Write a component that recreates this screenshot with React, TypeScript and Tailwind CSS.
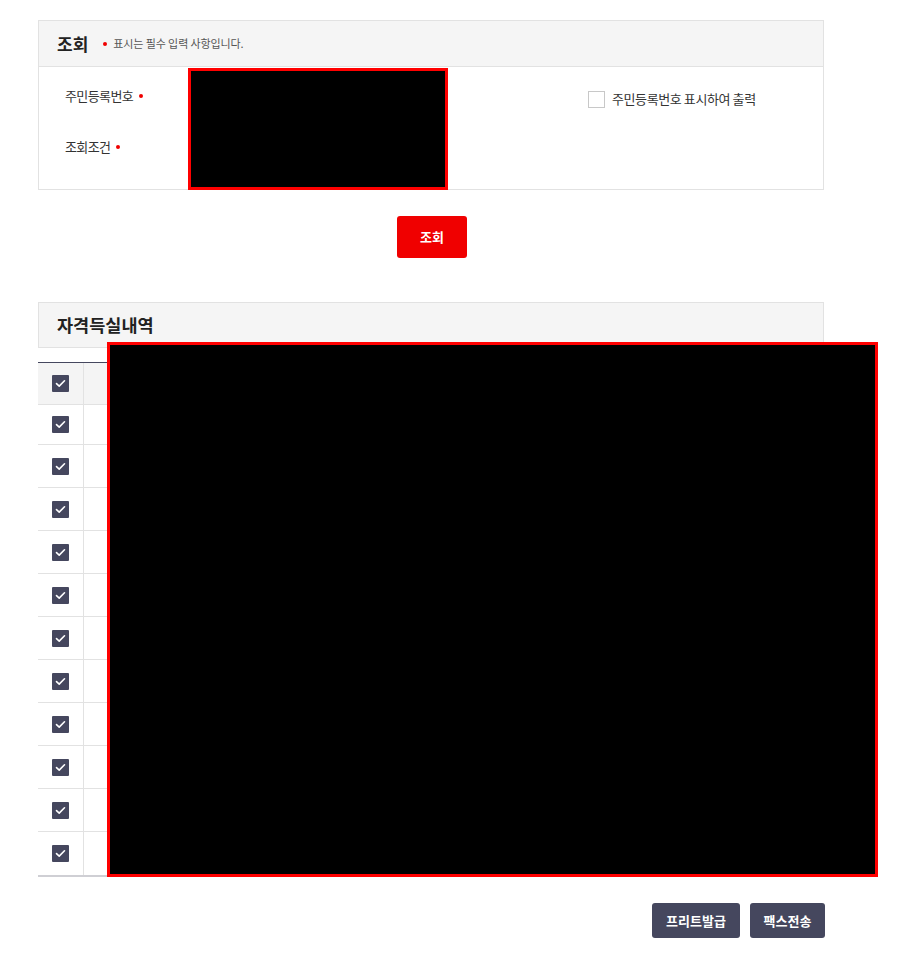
import React from "react";

const font = { fontFamily: '"Noto Sans CJK KR", "Noto Sans", sans-serif' };

function Check() {
    return (
        <span className="flex h-[17px] w-[17px] items-center justify-center rounded-[1px] bg-[#45475e]">
            <svg width="11" height="9" viewBox="0 0 11 9" fill="none">
                <path d="M1.5 4.6 L4.2 7.1 L9.5 1.8" stroke="#ffffff" strokeWidth="1.6" strokeLinecap="round" strokeLinejoin="round" />
            </svg>
        </span>
    );
}

function Dot() {
    return <span className="inline-block h-[4px] w-[4px] rounded-full bg-[#f00000]" />;
}

export default function App() {
    const rows = Array.from({ length: 11 }, (_, i) => i);

    return (
        <div className="relative min-h-[960px] w-[916px] bg-white pl-[38px] text-[#333]" style={font}>
            <div className="w-[786px] pt-[20px]">
                {/* 조회 */}
                <div className="border border-[#e2e2e2]">
                    <div className="flex h-[46px] items-center border-b border-[#e2e2e2] bg-[#f5f5f5] pl-[18px]">
                        <h2 className="text-[17px] font-bold text-[#222]">조회</h2>
                        <span className="ml-[15px] flex items-center gap-[6px] text-[11px] tracking-[-0.1px] text-[#555]">
                            <Dot />
                            표시는 필수 입력 사항입니다.
                        </span>
                    </div>
                    <div className="relative flex h-[122px]">
                        <div className="flex w-[150px] flex-col gap-[33px] pl-[26px] pt-[20px] text-[13px] tracking-[-0.6px]">
                            <div className="flex h-[18px] items-center gap-[6px]">
                                주민등록번호 <Dot />
                            </div>
                            <div className="flex h-[18px] items-center gap-[6px]">
                                조회조건 <Dot />
                            </div>
                        </div>
                        <div className="ml-[399px] mt-[23px] flex h-[18px] items-center gap-[7px] text-[13px] tracking-[-0.4px]">
                            <span className="h-[17px] w-[17px] border border-[#c8c8c8] bg-white" />
                            주민등록번호 표시하여 출력
                        </div>
                    </div>
                </div>

                <div className="flex w-[788px] justify-center pt-[26px]">
                    <button className="h-[42px] w-[70px] rounded-[3px] bg-[#f00000] text-[13px] font-bold text-white">조회</button>
                </div>

                {/* 자격득실내역 */}
                <div className="mt-[44px] flex h-[46px] items-center border border-[#e2e2e2] bg-[#f5f5f5] pl-[18px]">
                    <h2 className="text-[17.5px] font-bold text-[#222]">자격득실내역</h2>
                </div>

                <div className="mt-[14px] border-t border-[#45475e] border-b-2 border-b-[#cfcfd4]">
                    <div className="flex h-[42px] border-b border-[#e2e2e2] bg-[#f4f4f4]">
                        <div className="flex w-[46px] items-center justify-center border-r border-[#e2e2e2]">
                            <Check />
                        </div>
                        <div className="flex-1" />
                    </div>
                    {rows.map((i) => (
                        <div key={i} className={`flex border-[#e2e2e2] ${i === 0 ? "h-[40px]" : "h-[43px]"} ${i < 10 ? "border-b" : ""}`}>
                            <div className="flex w-[46px] items-center justify-center border-r border-[#e2e2e2]">
                                <Check />
                            </div>
                            <div className="flex-1" />
                        </div>
                    ))}
                </div>

                <div className="flex w-[787px] justify-end gap-[10px] pt-[26px]">
                    <button className="h-[35px] w-[88px] rounded-[3px] bg-[#45475e] text-[13px] font-bold text-white">프리트발급</button>
                    <button className="h-[35px] w-[75px] rounded-[3px] bg-[#45475e] text-[13px] font-bold text-white">팩스전송</button>
                </div>
            </div>

            {/* redactions over content */}
            <div className="absolute left-[188px] top-[68px] h-[122px] w-[260px] border-[3px] border-[#ff0000] bg-black" />
            <div className="absolute left-[107px] top-[342px] h-[535px] w-[771px] border-[3px] border-[#ff0000] bg-black" />
        </div>
    );
}
